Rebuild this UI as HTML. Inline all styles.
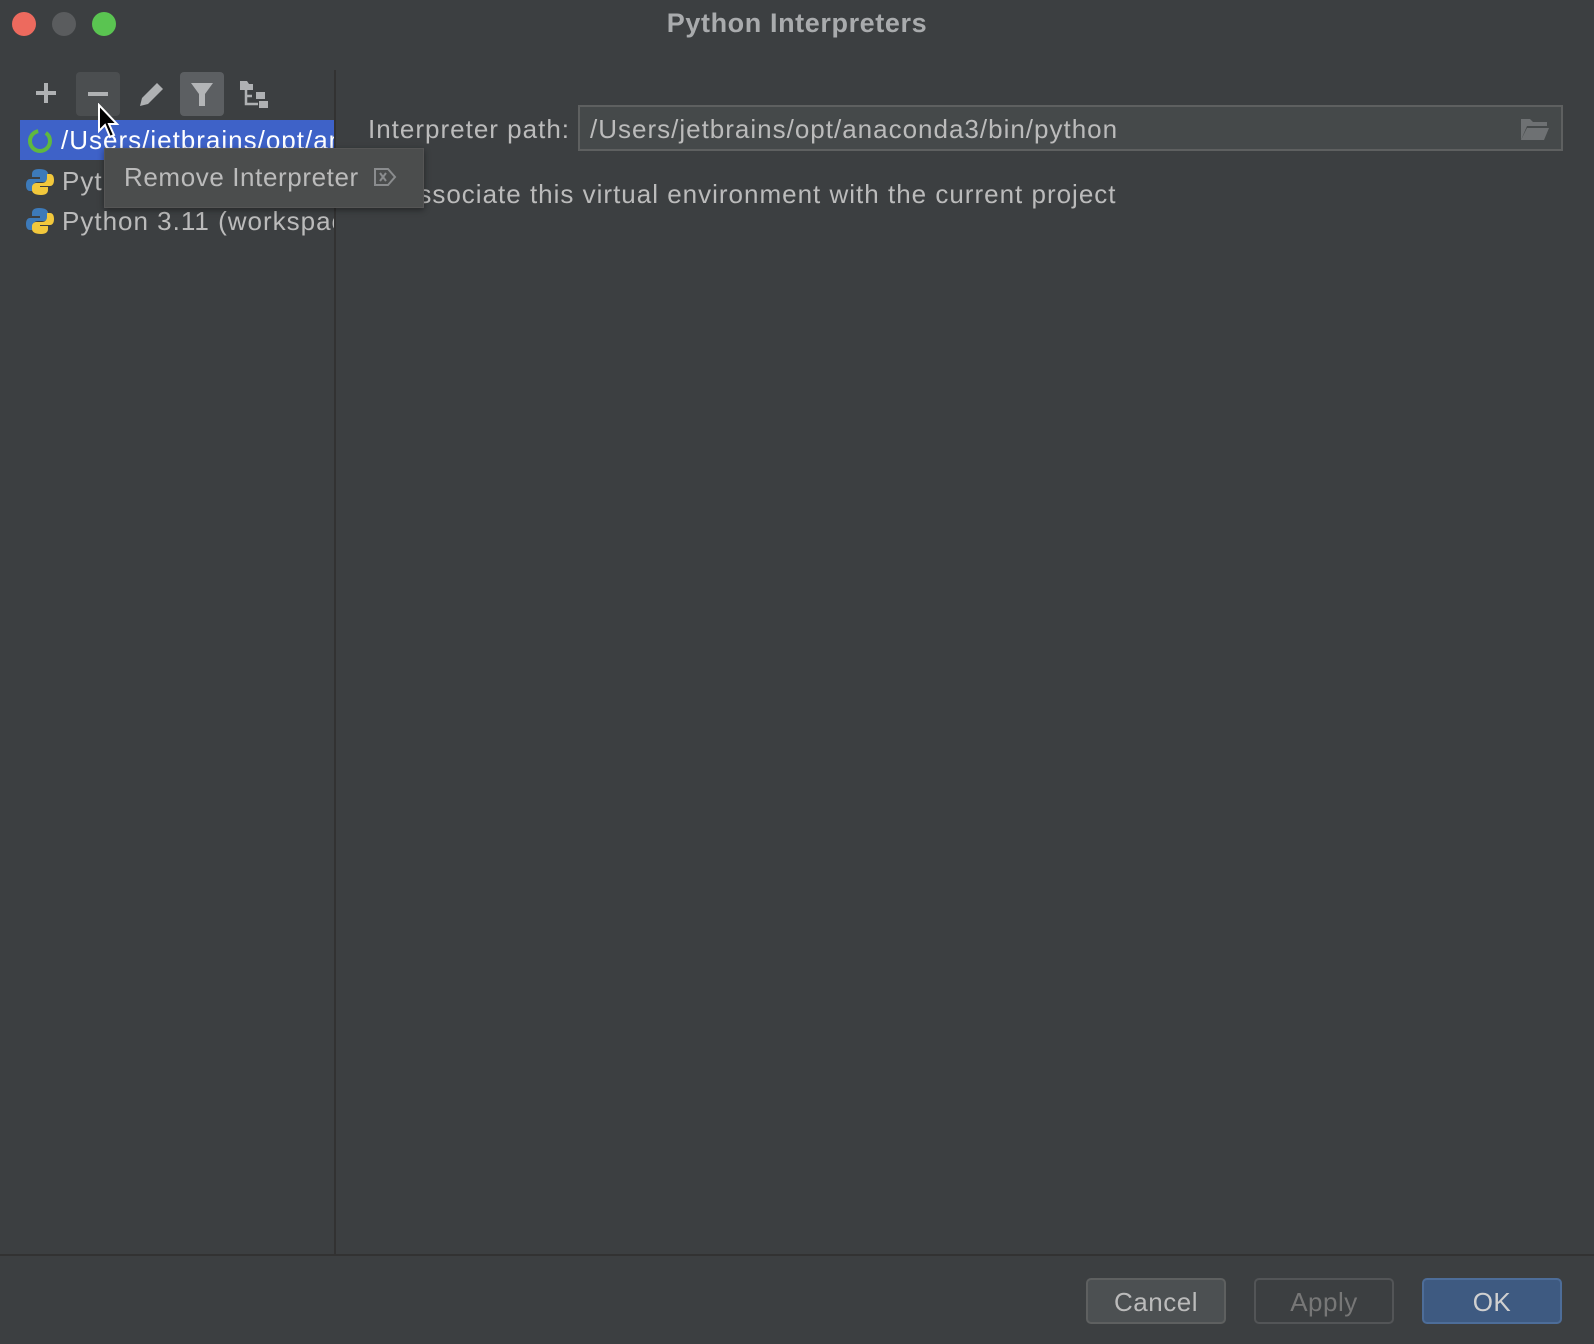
<!DOCTYPE html>
<html><head><meta charset="utf-8"><style>
html,body{margin:0;padding:0;}
body{width:1594px;height:1344px;background:#3c3f41;position:relative;overflow:hidden;font-family:"Liberation Sans",sans-serif;color:#bbbbbb;}
.a{position:absolute;}
.dot{position:absolute;width:24px;height:24px;border-radius:50%;top:12px;}
.t{font-size:26px;letter-spacing:1px;white-space:nowrap;}
.btn{position:absolute;top:1278px;height:46px;width:140px;border-radius:5px;box-sizing:border-box;font-size:26px;text-align:center;line-height:44px;letter-spacing:0.5px;}
</style></head><body>
<div class="dot" style="left:12px;background:#ed6a5e"></div>
<div class="dot" style="left:52px;background:#5a5c5e"></div>
<div class="dot" style="left:92px;background:#5ac451"></div>
<div class="a" style="left:0;width:1594px;top:8px;text-align:center;font-size:27px;letter-spacing:0.6px;font-weight:bold;color:#a9abad">Python Interpreters</div>

<svg class="a" style="left:0;top:60px" width="330" height="60">
<rect x="36" y="31" width="20" height="4" fill="#afb1b3"/><rect x="44" y="23" width="4" height="20" fill="#afb1b3"/>
<rect x="76" y="12" width="44" height="44" rx="4" fill="#4b4e50"/>
<rect x="88" y="32" width="20" height="4" fill="#afb1b3"/>
<path d="M140 46 L142 38 L157 23 L163 29 L148 44 Z" fill="#afb1b3"/>
<rect x="180" y="12" width="44" height="44" rx="4" fill="#5c5f62"/>
<path d="M191 23 L213 23 L205 34 L205 46 L199 46 L199 34 Z" fill="#b3b5b7"/>
<path d="M240 21 h7 l2 3 h4 v6 h-13z" fill="#afb1b3"/>
<path d="M246 30 v14 h12 M246 36 h6" stroke="#afb1b3" stroke-width="2.5" fill="none"/>
<rect x="256" y="32" width="9" height="7" fill="#afb1b3"/><rect x="259" y="41" width="9" height="7" fill="#afb1b3"/>
</svg>

<div class="a" style="left:20px;top:120px;width:314px;height:40px;background:#3e62c8"></div>
<svg class="a" style="left:26px;top:127px" width="28" height="28"><circle cx="14" cy="14" r="10" fill="none" stroke="#5fb83f" stroke-width="4" stroke-dasharray="45 8"/></svg>
<div class="a t" style="left:61px;top:125px;color:#fff;width:273px;overflow:hidden">/Users/jetbrains/opt/anaconda3</div>
<svg class="a" style="left:25px;top:167px" width="30" height="30"><path d="M14 2 c-6 0-7 3-7 5 v3 h8 v2 H5 c-3 0-4 3-4 6 s1 6 4 6 h3 v-4 c0-3 2-5 5-5 h6 c2 0 4-2 4-4 V7 c0-3-3-5-9-5z" fill="#3d7ab9"/><path d="M16 28 c6 0 7-3 7-5 v-3 h-8 v-1 h10 c3 0 4-3 4-6 s-1-6-4-6 h-3 v4 c0 3-2 5-5 5 h-6 c-2 0-4 2-4 4 v3 c0 3 3 5 9 5z" fill="#f2c83c"/></svg>
<div class="a t" style="left:62px;top:166px">Pyt</div>
<svg class="a" style="left:25px;top:206px" width="30" height="30"><path d="M14 2 c-6 0-7 3-7 5 v3 h8 v2 H5 c-3 0-4 3-4 6 s1 6 4 6 h3 v-4 c0-3 2-5 5-5 h6 c2 0 4-2 4-4 V7 c0-3-3-5-9-5z" fill="#3d7ab9"/><path d="M16 28 c6 0 7-3 7-5 v-3 h-8 v-1 h10 c3 0 4-3 4-6 s-1-6-4-6 h-3 v4 c0 3-2 5-5 5 h-6 c-2 0-4 2-4 4 v3 c0 3 3 5 9 5z" fill="#f2c83c"/></svg>
<div class="a t" style="left:62px;top:206px;width:272px;overflow:hidden">Python 3.11 (workspace)</div>
<div class="a" style="left:334px;top:70px;width:2px;height:1184px;background:#323232"></div>

<div class="a t" style="left:368px;top:114px">Interpreter path:</div>
<div class="a" style="left:578px;top:105px;width:985px;height:46px;box-sizing:border-box;border:2px solid #5e6060;background:#45494a"></div>
<div class="a t" style="left:590px;top:114px;color:#bbbbbb">/Users/jetbrains/opt/anaconda3/bin/python</div>
<svg class="a" style="left:1519px;top:116px" width="32" height="26"><path d="M2 3 h9 l3 3 h14 v4 H8 L2 24z" fill="#6e7173"/><path d="M8 12 h22 l-5 12 H2z" fill="#6e7173"/></svg>
<div class="a t" style="left:400px;top:179px">Associate this virtual environment with the current project</div>

<div class="a" style="left:104px;top:148px;width:318px;height:58px;background:#4b4d4d;border:1px solid #555;box-shadow:0 2px 6px rgba(0,0,0,.4)"></div>
<div class="a t" style="left:124px;top:162px;font-size:26px;letter-spacing:0.6px;color:#bbbbbb">Remove Interpreter</div>
<svg class="a" style="left:373px;top:166px" width="24" height="22"><path d="M2 3 h13 l7 8 -7 8 H2z" fill="none" stroke="#8a8c8e" stroke-width="2"/><path d="M7 7 l6 8 M13 7 l-6 8" stroke="#8a8c8e" stroke-width="2"/></svg>

<svg class="a" style="left:97px;top:103px" width="26" height="38"><path d="M2 2 L2 28 L8 22 L13 34 L17 32 L12 21 L20 21 Z" fill="#000" stroke="#fff" stroke-width="2"/></svg>

<div class="a" style="left:0;top:1254px;width:1594px;height:2px;background:#323232"></div>
<div class="btn" style="left:1086px;background:#4c5052;border:2px solid #5e6060;color:#bbbbbb">Cancel</div>
<div class="btn" style="left:1254px;background:#3c3f41;border:2px solid #535557;color:#777">Apply</div>
<div class="btn" style="left:1422px;background:#3e5a81;border:2px solid #4d6d99;color:#d0d0d0">OK</div>
</body></html>
